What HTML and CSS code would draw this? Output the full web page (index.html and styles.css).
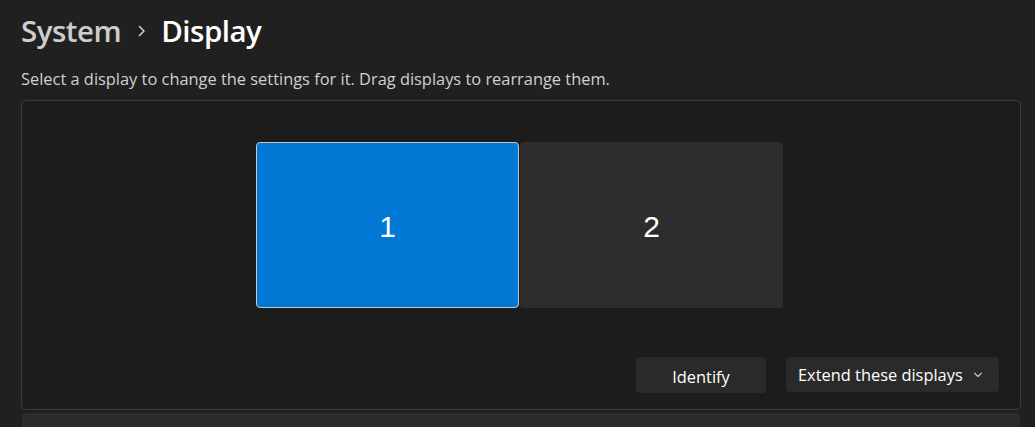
FILE: index.html
```html
<!DOCTYPE html>
<html>
<head>
<meta charset="utf-8">
<link rel="stylesheet" href="styles.css">
</head>
<body>
<div class="page">
  <h1 class="title">
    <span class="crumb">System</span>
    <svg class="sep" width="8" height="12" viewBox="0 0 8 12"><path d="M1.5 1.5 L6 6 L1.5 10.5" fill="none" stroke="#d0d0d0" stroke-width="1.5" stroke-linecap="round" stroke-linejoin="round"/></svg>
    <span class="current">Display</span>
  </h1>
  <p class="desc">Select a display to change the settings for it. Drag displays to rearrange them.</p>
  <div class="panel">
    <div class="monitors">
      <div class="monitor selected">1</div>
      <div class="monitor">2</div>
    </div>
    <div class="actions">
      <button class="btn identify">Identify</button>
      <button class="btn dropdown"><span>Extend these displays</span>
        <svg width="10" height="6" viewBox="0 0 10 6"><path d="M1.5 1.2 L5 4.5 L8.5 1.2" fill="none" stroke="#cfcfcf" stroke-width="1.1" stroke-linecap="round" stroke-linejoin="round"/></svg>
      </button>
    </div>
  </div>
  <div class="next-card"></div>
</div>
</body>
</html>
```
FILE: styles.css
```css
html, body {
  margin: 0;
  padding: 0;
  background: #202020;
  height: 100%;
  overflow: hidden;
}
.page {
  padding: 0 0 0 21px;
  font-family: "Open Sans", "Noto Sans", sans-serif;
  color: #ffffff;
}
.title {
  margin: 0;
  padding-top: 10px;
  height: 40px;
  display: flex;
  align-items: center;
  font-size: 29.5px;
  font-weight: 600;
  letter-spacing: -0.5px;
}
.crumb {
  color: #cdcdcd;
}
.sep {
  margin: 1px 15px 0 17px;
}
.current {
  color: #ffffff;
}
.desc {
  margin: 18px 0 0 0;
  font-size: 16.4px;
  line-height: 22px;
  color: #d0d0d0;
}
.panel {
  margin-top: 10px;
  width: 998px;
  height: 308px;
  background: #1c1c1c;
  border: 1px solid #3c3c3c;
  border-radius: 5px;
  display: flex;
  flex-direction: column;
}
.monitors {
  margin-top: 41px;
  display: flex;
  justify-content: center;
  gap: 1px;
  padding-right: 3px;
}
.monitor {
  width: 261px;
  height: 160px;
  border: 1px solid transparent;
  border-radius: 4px;
  background: #2d2d2d;
  display: flex;
  align-items: center;
  justify-content: center;
  padding-top: 4px;
  box-sizing: content-box;
  font-family: "Liberation Sans", Arial, sans-serif;
  font-size: 30px;
  color: #ffffff;
}
.monitor.selected {
  background: #0078d4;
  border-color: #c8c8c8;
}
.actions {
  margin-top: 49px;
  display: flex;
  justify-content: flex-end;
  gap: 20px;
  padding-right: 21px;
}
.btn {
  height: 36px;
  border: none;
  border-radius: 4px;
  background: #2a2a2a;
  color: #ffffff;
  font-family: "Open Sans", "Noto Sans", sans-serif;
  font-size: 16.4px;
  padding: 0;
}
.identify {
  width: 130px;
  padding-top: 3px;
}
.dropdown {
  width: 213px;
  height: 35px;
  display: flex;
  align-items: center;
  justify-content: space-between;
  padding: 0 16px 0 12px;
  box-sizing: border-box;
}
.next-card {
  margin-top: 3px;
  margin-left: 1px;
  width: 998px;
  height: 20px;
  background: #2b2b2b;
  border-radius: 4px 4px 0 0;
}
```
